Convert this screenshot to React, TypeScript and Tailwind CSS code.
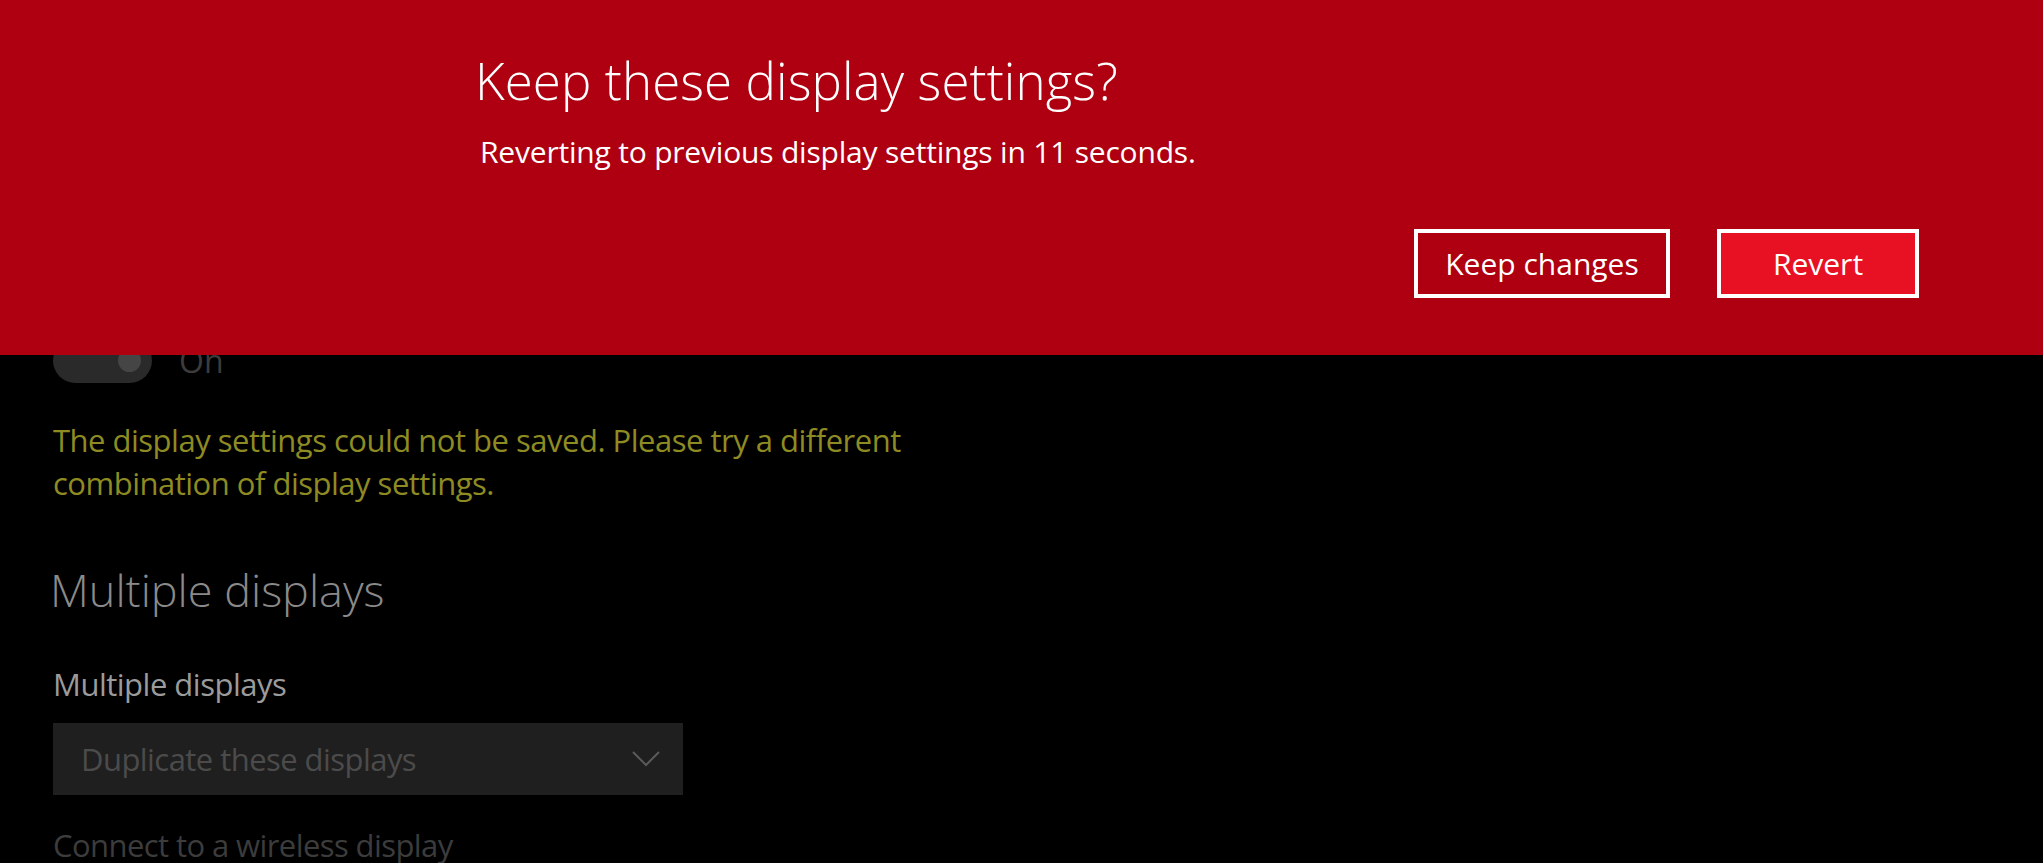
import React from 'react';

const font = { fontFamily: '"Open Sans", "Noto Sans", sans-serif' };

export default function App() {
  return (
    <div className="relative w-[2043px] h-[863px] overflow-hidden bg-black" style={font}>
      {/* dimmed settings page behind the prompt */}
      <div className="flex flex-col items-start pl-[53px] pt-[338px]">
        <div className="flex items-center gap-[27px]">
          <div className="flex items-center justify-end w-[99px] h-[45px] rounded-full bg-[#2a2a2a] pr-[11px]">
            <div className="w-[23px] h-[23px] rounded-full bg-[#454545]" />
          </div>
          <span className="text-[32px] leading-[43px] text-[#3c3c3c]">On</span>
        </div>

        <p className="mt-[36px] text-[31px] leading-[43px] tracking-[-0.5px] text-[#8e8b22]">
          The display settings could not be saved. Please try a different
          <br />
          combination of display settings.
        </p>

        <h2 className="-ml-[3px] mt-[57px] text-[45px] font-light leading-[56px] text-[#8a8a8a]">Multiple displays</h2>

        <div className="mt-[45px] text-[31px] leading-[43px] tracking-[-0.5px] text-[#9b9b9b]">Multiple displays</div>

        <div className="mt-[17px] flex items-center justify-between w-[630px] h-[72px] bg-[#1f1f1f] pl-[28px] pr-[23px]">
          <span className="text-[31px] leading-[72px] tracking-[-0.55px] text-[#4b4b4b]">Duplicate these displays</span>
          <svg width="28" height="16" viewBox="0 0 28 16" fill="none">
            <path d="M1 1 L14 14 L27 1" stroke="#5a5a5a" strokeWidth="2" />
          </svg>
        </div>

        <div className="mt-[29px] text-[31px] leading-[43px] tracking-[-0.58px] text-[#3c3c3c]">Connect to a wireless display</div>
      </div>

      {/* revert prompt */}
      <div className="absolute inset-x-0 top-0 h-[355px] bg-[#ae0010] flex flex-col">
        <div className="pl-[475px] pt-[50px]">
          <h1 className="text-[51px] font-light leading-[60px] tracking-[0.1px] text-white">Keep these display settings?</h1>
          <p className="mt-[22px] pl-[5px] text-[30px] leading-[40px] tracking-[-0.2px] text-white">
            Reverting to previous display settings in 11 seconds.
          </p>
        </div>
        <div className="mt-[57px] flex justify-end gap-[47px] pr-[124px]">
          <button className="w-[256px] h-[69px] border-4 border-white text-[30px] text-white">Keep changes</button>
          <button className="w-[202px] h-[69px] border-4 border-white bg-[#e81123] text-[30px] text-white">Revert</button>
        </div>
      </div>
    </div>
  );
}
